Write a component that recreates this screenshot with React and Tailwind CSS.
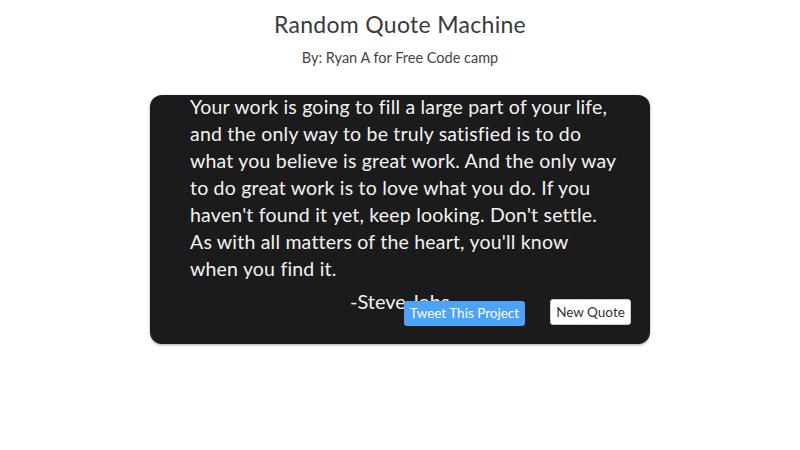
export default function App() {
  return (
    <div
      className="min-h-[450px] w-full bg-white flex flex-col items-center text-[#333]"
      style={{ fontFamily: '"Lato", "Open Sans", sans-serif' }}
    >
      <h1 className="mt-[9px] text-[23px] leading-[30px] font-normal text-[#3a3a3a] tracking-[0.3px]">
        Random Quote Machine
      </h1>
      <p className="mt-[10px] text-[14.5px] leading-[18px] text-[#444]">
        By: Ryan A for Free Code camp
      </p>
      <div className="mt-[28px] w-[500px] h-[249px] rounded-[12px] bg-[#1b1b1b] shadow-[0_1px_3px_rgba(0,0,0,0.35)] pl-[40px] pr-[30px] flex flex-col">
        <p className="-mt-[2px] text-[19.5px] leading-[27px] text-[#f2f2f2] tracking-[0.2px]">
          Your work is going to fill a large part of your life, and the only way to be truly satisfied is to do what you believe is great work. And the only way to do great work is to love what you do. If you haven't found it yet, keep looking. Don't settle. As with all matters of the heart, you'll know when you find it.
        </p>
        <p className="mt-[7px] pl-[160px] text-[20px] leading-[24px] text-[#f2f2f2]">-Steve Jobs</p>
        <div className="-mt-[14px] flex items-start justify-end gap-[25px] relative">
          <button className="mt-[2px] h-[25px] w-[121px] rounded-[3px] bg-[#4da3f5] text-white text-[13.5px] leading-[25px]">
            Tweet This Project
          </button>
          <button className="h-[26px] w-[81px] rounded-[3px] bg-white border border-[#ccc] text-[#333] text-[13.5px] leading-[24px] -mr-[11px]">
            New Quote
          </button>
        </div>
      </div>
    </div>
  );
}
